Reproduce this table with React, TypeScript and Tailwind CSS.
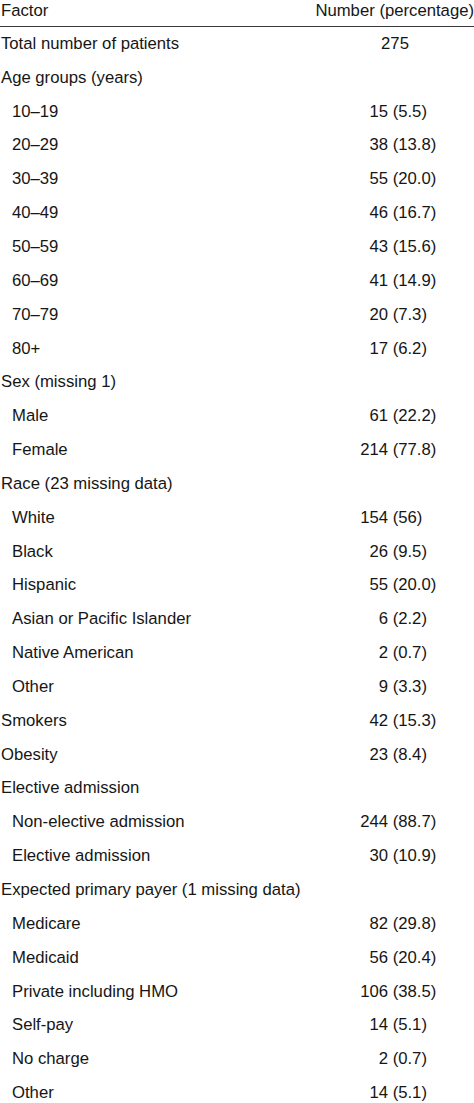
import React, { FC } from 'react';

interface Row {
  label: string;
  sub?: boolean;
  n?: string;
  pct?: string;
}

const rows: Row[] = [
  { label: 'Age groups (years)' },
  { label: '10–19', sub: true, n: '15', pct: '5.5' },
  { label: '20–29', sub: true, n: '38', pct: '13.8' },
  { label: '30–39', sub: true, n: '55', pct: '20.0' },
  { label: '40–49', sub: true, n: '46', pct: '16.7' },
  { label: '50–59', sub: true, n: '43', pct: '15.6' },
  { label: '60–69', sub: true, n: '41', pct: '14.9' },
  { label: '70–79', sub: true, n: '20', pct: '7.3' },
  { label: '80+', sub: true, n: '17', pct: '6.2' },
  { label: 'Sex (missing 1)' },
  { label: 'Male', sub: true, n: '61', pct: '22.2' },
  { label: 'Female', sub: true, n: '214', pct: '77.8' },
  { label: 'Race (23 missing data)' },
  { label: 'White', sub: true, n: '154', pct: '56' },
  { label: 'Black', sub: true, n: '26', pct: '9.5' },
  { label: 'Hispanic', sub: true, n: '55', pct: '20.0' },
  { label: 'Asian or Pacific Islander', sub: true, n: '6', pct: '2.2' },
  { label: 'Native American', sub: true, n: '2', pct: '0.7' },
  { label: 'Other', sub: true, n: '9', pct: '3.3' },
  { label: 'Smokers', n: '42', pct: '15.3' },
  { label: 'Obesity', n: '23', pct: '8.4' },
  { label: 'Elective admission' },
  { label: 'Non-elective admission', sub: true, n: '244', pct: '88.7' },
  { label: 'Elective admission', sub: true, n: '30', pct: '10.9' },
  { label: 'Expected primary payer (1 missing data)' },
  { label: 'Medicare', sub: true, n: '82', pct: '29.8' },
  { label: 'Medicaid', sub: true, n: '56', pct: '20.4' },
  { label: 'Private including HMO', sub: true, n: '106', pct: '38.5' },
  { label: 'Self-pay', sub: true, n: '14', pct: '5.1' },
  { label: 'No charge', sub: true, n: '2', pct: '0.7' },
  { label: 'Other', sub: true, n: '14', pct: '5.1' },
];

const App: FC = () => {
  return (
    <div
      className="w-[474px] bg-white text-[#161616] text-[16.7px] leading-[20px]"
      style={{ fontFamily: '"Liberation Sans", Arial, sans-serif' }}
    >
      {/* header */}
      <div className="flex justify-between items-start h-[27px] pt-[1px] border-b border-[#3a3a3a]">
        <span className="pl-[1px]">Factor</span>
        <span className="whitespace-nowrap">Number (percentage)</span>
      </div>

      <div className="flex items-center h-[33.85px]">
        <span className="flex-1 pl-[1px]">Total number of patients</span>
        <span className="w-[158px] text-center">275</span>
      </div>

      {rows.map((row, i) => (
        <div key={i} className="flex items-center h-[33.85px]">
          <span className={`flex-1 whitespace-nowrap ${row.sub ? 'pl-[12px]' : 'pl-[1px]'}`}>
            {row.label}
          </span>
          {row.n && (
            <div className="flex w-[158px] whitespace-nowrap">
              <span className="w-[72px] text-right">{row.n}</span>
              <span>&nbsp;({row.pct})</span>
            </div>
          )}
        </div>
      ))}
    </div>
  );
};

export default App;
